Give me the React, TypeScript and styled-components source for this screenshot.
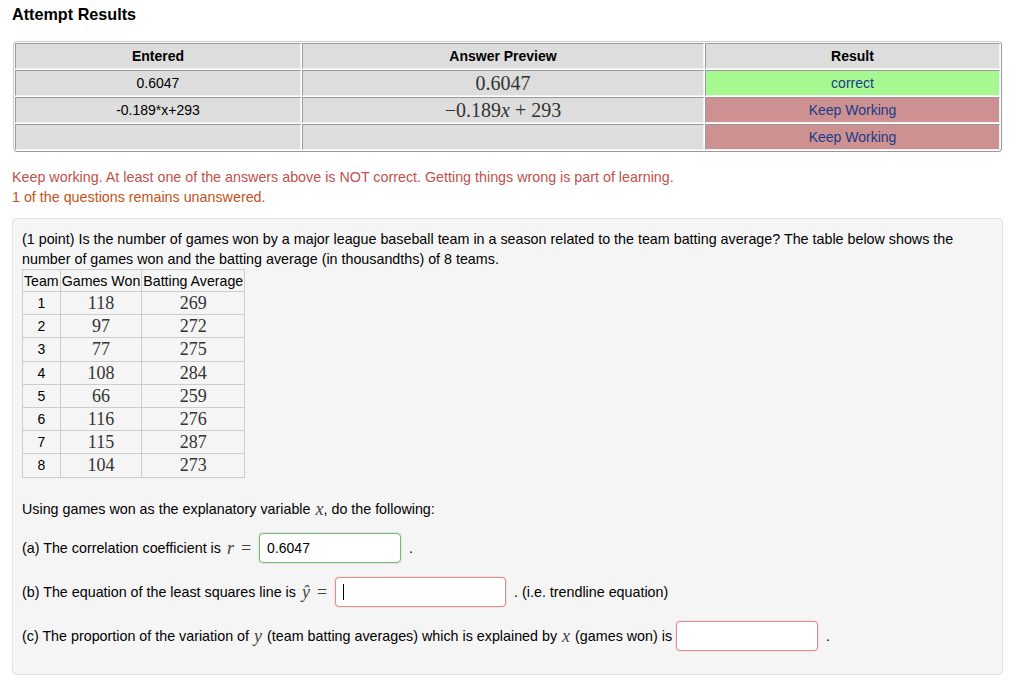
import React from 'react';
import styled, { createGlobalStyle } from 'styled-components';

const GlobalStyle = createGlobalStyle`
  html, body {
    margin: 0;
    padding: 0;
    background: #fff;
  }
  body {
    font-family: "Liberation Sans", Arial, Helvetica, sans-serif;
    font-size: 14.3px;
    color: #000;
  }
`;

const Page = styled.div`
  width: 991px;
  padding: 4px 0 0 12px;
`;

const Heading = styled.h2`
  margin: 0 0 17px;
  font-size: 16.2px;
  font-weight: 700;
  line-height: 20px;
`;

const ResultsTable = styled.table`
  margin-left: 1px;
  border-collapse: separate;
  border-spacing: 1px;
  border: 1px solid;
  border-color: #ccc #999 #999 #ccc;
  border-radius: 4px;
  table-layout: fixed;
`;

const HeadCell = styled.th<{ $w: number }>`
  width: ${(p) => p.$w}px;
  height: 24px;
  padding: 0;
  background: #ddd;
  border: 1px solid;
  border-color: #999 #f2f2f2 #f2f2f2 #999;
  font-size: 14px;
  font-weight: 700;
  text-align: center;
  vertical-align: middle;
`;

type Status = 'plain' | 'correct' | 'wrong';

const Cell = styled.td<{ $status?: Status }>`
  height: 24px;
  padding: 0;
  background: ${(p) =>
    p.$status === 'correct' ? '#a6f891' : p.$status === 'wrong' ? '#cc9190' : '#ddd'};
  color: ${(p) => (p.$status && p.$status !== 'plain' ? '#1b3a8c' : '#000')};
  border: 1px solid;
  border-color: #999 #f2f2f2 #f2f2f2 #999;
  font-size: 14px;
  text-align: center;
  vertical-align: middle;
`;

const PreviewMath = styled.span`
  font-family: "Liberation Serif", "Times New Roman", serif;
  font-size: 20px;
  color: #333;
`;

const MathVar = styled.i`
  font-family: "Liberation Serif", "Times New Roman", serif;
  font-style: italic;
`;

const Messages = styled.div`
  margin-top: 15px;
  line-height: 20px;
`;

const Message = styled.div<{ $tone: 'error' | 'warn' }>`
  color: ${(p) => (p.$tone === 'error' ? '#c2504b' : '#c4521c')};
`;

const ProblemBox = styled.div`
  margin-top: 11px;
  box-sizing: border-box;
  width: 991px;
  padding: 10px 9px 23px;
  background: #f5f5f5;
  border: 1px solid #e3e3e3;
  border-radius: 4px;
  line-height: 20px;
`;

const Intro = styled.div`
  margin: 0;
`;

const DataTable = styled.table`
  border-collapse: collapse;
  border: 1px solid #222;
`;

const DataHead = styled.th`
  padding: 0 1px;
  height: 21px;
  font-weight: 400;
  font-size: 14.2px;
  white-space: nowrap;
  border: 1px solid #ccc;
`;

const DataCell = styled.td<{ $serif?: boolean; $w?: number }>`
  height: 22.2px;
  padding: 0;
  text-align: center;
  border: 1px solid #ccc;
  font-family: ${(p) =>
    p.$serif ? '"Liberation Serif", "Times New Roman", serif' : '"Liberation Sans", Arial, sans-serif'};
  font-size: ${(p) => (p.$serif ? '18px' : '14px')};
  color: ${(p) => (p.$serif ? '#333' : '#000')};
  line-height: 18px;
  ${(p) => (p.$w ? `width: ${p.$w}px;` : '')}
`;

const Para = styled.div<{ $gap: number }>`
  margin-top: ${(p) => p.$gap}px;
  display: flex;
  align-items: center;
  min-height: 30px;
  white-space: nowrap;
`;

const InlineMath = styled.span`
  font-family: "Liberation Serif", "Times New Roman", serif;
  font-size: 18px;
  color: #444;
  margin: 0 8px 0 6px;
  display: inline-flex;
  gap: 7px;
  align-items: baseline;
`;

const TextVar = styled(MathVar)`
  font-size: 18px;
  color: #444;
  margin: 0 5px;
`;

const AnswerBox = styled.span<{ $state: 'ok' | 'bad'; $w: number }>`
  box-sizing: border-box;
  display: inline-flex;
  align-items: center;
  width: ${(p) => p.$w}px;
  height: 30px;
  padding: 0 7px;
  background: #fff;
  border: 1px solid ${(p) => (p.$state === 'ok' ? '#79b873' : '#e08d8d')};
  box-shadow: 0 0 2px ${(p) => (p.$state === 'ok' ? 'rgba(70,150,60,0.35)' : 'rgba(200,70,70,0.35)')};
  border-radius: 4px;
  font-size: 14px;
`;

const Caret = styled.span`
  display: inline-block;
  width: 1px;
  height: 16px;
  background: #000;
`;

const After = styled.span`
  margin-left: 8px;
`;

const rows = [
  { team: 1, won: 118, avg: 269 },
  { team: 2, won: 97, avg: 272 },
  { team: 3, won: 77, avg: 275 },
  { team: 4, won: 108, avg: 284 },
  { team: 5, won: 66, avg: 259 },
  { team: 6, won: 116, avg: 276 },
  { team: 7, won: 115, avg: 287 },
  { team: 8, won: 104, avg: 273 },
];

export default function App() {
  return (
    <Page>
      <GlobalStyle />
      <Heading>Attempt Results</Heading>
      <ResultsTable>
        <thead>
          <tr>
            <HeadCell $w={284}>Entered</HeadCell>
            <HeadCell $w={400}>Answer Preview</HeadCell>
            <HeadCell $w={293}>Result</HeadCell>
          </tr>
        </thead>
        <tbody>
          <tr>
            <Cell>0.6047</Cell>
            <Cell>
              <PreviewMath>0.6047</PreviewMath>
            </Cell>
            <Cell $status="correct">correct</Cell>
          </tr>
          <tr>
            <Cell>-0.189*x+293</Cell>
            <Cell>
              <PreviewMath>
                −0.189<MathVar>x</MathVar> + 293
              </PreviewMath>
            </Cell>
            <Cell $status="wrong">Keep Working</Cell>
          </tr>
          <tr>
            <Cell />
            <Cell />
            <Cell $status="wrong">Keep Working</Cell>
          </tr>
        </tbody>
      </ResultsTable>

      <Messages>
        <Message $tone="error">
          Keep working. At least one of the answers above is NOT correct. Getting things wrong is part of learning.
        </Message>
        <Message $tone="warn">1 of the questions remains unanswered.</Message>
      </Messages>

      <ProblemBox>
        <Intro>
          (1 point) Is the number of games won by a major league baseball team in a season related to the team batting
          average? The table below shows the number of games won and the batting average (in thousandths) of 8 teams.
        </Intro>
        <DataTable>
          <thead>
            <tr>
              <DataHead>Team</DataHead>
              <DataHead>Games Won</DataHead>
              <DataHead>Batting Average</DataHead>
            </tr>
          </thead>
          <tbody>
            {rows.map((r) => (
              <tr key={r.team}>
                <DataCell $w={34}>{r.team}</DataCell>
                <DataCell $serif>{r.won}</DataCell>
                <DataCell $serif>{r.avg}</DataCell>
              </tr>
            ))}
          </tbody>
        </DataTable>

        <Para $gap={16}>
          Using games won as the explanatory variable
          <TextVar style={{ marginRight: 0 }}>x</TextVar>, do the following:
        </Para>
        <Para $gap={9}>
          (a) The correlation coefficient is
          <InlineMath>
            <MathVar>r</MathVar>=
          </InlineMath>
          <AnswerBox $state="ok" $w={142}>
            0.6047
          </AnswerBox>
          <After>.</After>
        </Para>
        <Para $gap={14}>
          (b) The equation of the least squares line is
          <InlineMath>
            <MathVar>ŷ</MathVar>=
          </InlineMath>
          <AnswerBox $state="bad" $w={171}>
            <Caret />
          </AnswerBox>
          <After>. (i.e. trendline equation)</After>
        </Para>
        <Para $gap={14}>
          (c) The proportion of the variation of
          <TextVar>y</TextVar>(team batting averages) which is explained by
          <TextVar>x</TextVar>(games won) is&nbsp;
          <AnswerBox $state="bad" $w={142} />
          <After>.</After>
        </Para>
      </ProblemBox>
    </Page>
  );
}
